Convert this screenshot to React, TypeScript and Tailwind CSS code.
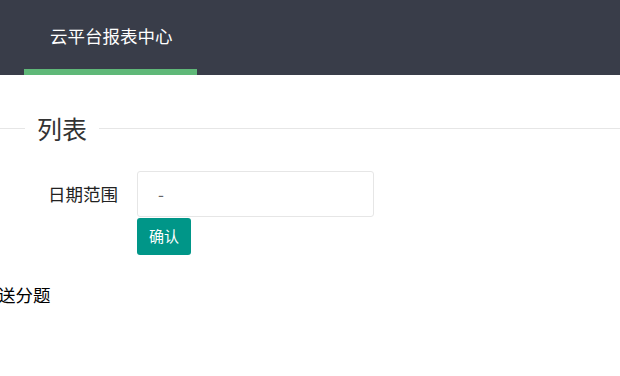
export default function App() {
  return (
    <div
      className="min-h-[376px] w-[620px] overflow-hidden bg-white text-[#333]"
      style={{ fontFamily: '"Noto Sans CJK SC", "Noto Sans", sans-serif' }}
    >
      <header className="flex h-[75px] items-stretch bg-[#393D49] pl-[24px]">
        <div className="relative flex w-[173px] items-center whitespace-nowrap pl-[26px] pb-[2px] text-[17.5px] text-white">
          云平台报表中心
          <span className="absolute bottom-0 left-0 h-[6px] w-full bg-[#5FB878]" />
        </div>
      </header>

      <div className="mt-[38px] flex items-center">
        <div className="h-px w-[25px] bg-[#e6e6e6]" />
        <div className="px-[12px] text-[25px] leading-[30px] text-[#333]">列表</div>
        <div className="h-px flex-1 bg-[#e6e6e6]" />
      </div>

      <div className="mt-[28px] flex items-center">
        <label className="w-[137px] pr-[19px] text-right text-[17.5px] text-[#222]">日期范围</label>
        <div className="flex h-[46px] w-[237px] items-center rounded-[3px] border border-[#e6e6e6] pl-[20px] text-[17px] text-[#666]">
          -
        </div>
      </div>
      <div className="mt-px pl-[137px]">
        <button className="h-[37px] rounded-[3px] bg-[#009688] px-[12px] text-[15px] text-white">确认</button>
      </div>

      <div className="-ml-[2px] mt-[28px] text-[17.5px] leading-[24px] text-black">送分题</div>
    </div>
  );
}
